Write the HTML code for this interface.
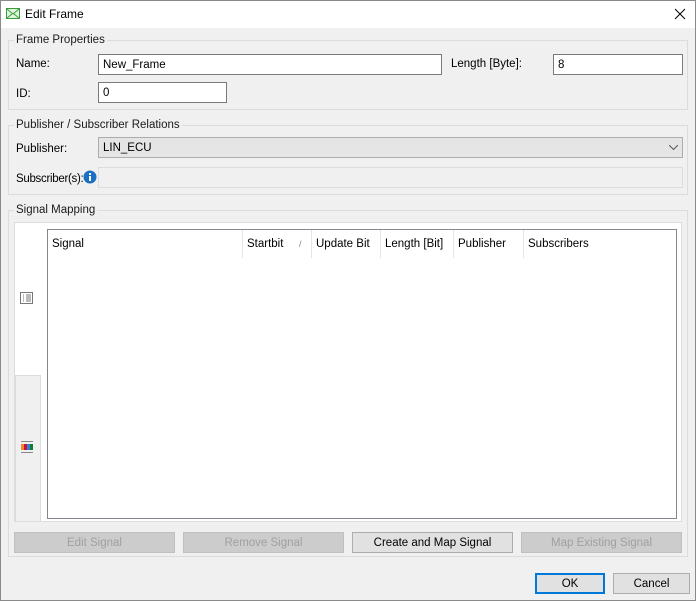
<!DOCTYPE html><html><head><style>
*{margin:0;padding:0;box-sizing:border-box}
body{width:696px;height:601px;background:#f0f0f0;font-family:"Liberation Sans",sans-serif;font-size:11.5px;line-height:15px;color:#000;position:relative;overflow:hidden}
.a{position:absolute}
.win{left:0;top:0;width:696px;height:601px;border:1px solid #8a8a8a}
.title{left:1px;top:1px;width:694px;height:27px;background:#fff}
.grp{border:1px solid #dcdcdc}
.lg{background:#f0f0f0;padding:0 2px;color:#1a1a1a}
.in{background:#fff;border:1px solid #7a7a7a;padding:2px 4px;height:21px;line-height:16px}
.btn{height:21px;text-align:center;line-height:20px;border:1px solid #bfbfbf;background:#cccccc;color:#a0a0a0}
.hd{top:0;height:28px;line-height:29px;padding-left:4px;border-right:1px solid #e5e5e5;color:#000}
</style></head><body>
<div class="a win"></div>
<div class="a title"></div>
<svg class="a" style="left:6px;top:8px" width="14" height="11"><rect x=".5" y=".5" width="13" height="10" fill="#dff5df" stroke="#3a9a3a"/><path d="M1 1l6 5 6-5M1 10l5-4M13 10l-5-4" stroke="#3a9a3a" fill="none"/></svg>
<div class="a" style="left:25px;top:7px;font-size:12px">Edit Frame</div>
<svg class="a" style="left:674px;top:8px" width="12" height="12"><path d="M1 1L11 11M11 1L1 11" stroke="#000" stroke-width="1"/></svg>

<div class="a grp" style="left:8px;top:40px;width:680px;height:70px"></div>
<div class="a lg" style="left:14px;top:33px">Frame Properties</div>
<div class="a" style="left:16px;top:57px">Name:</div>
<div class="a in" style="left:98px;top:54px;width:344px">New_Frame</div>
<div class="a" style="left:451px;top:57px">Length [Byte]:</div>
<div class="a in" style="left:553px;top:54px;width:130px">8</div>
<div class="a" style="left:16px;top:87px">ID:</div>
<div class="a in" style="left:98px;top:82px;width:129px">0</div>

<div class="a grp" style="left:8px;top:125px;width:680px;height:70px"></div>
<div class="a lg" style="left:14px;top:118px">Publisher / Subscriber Relations</div>
<div class="a" style="left:16px;top:142px">Publisher:</div>
<div class="a in" style="left:98px;top:137px;width:585px;background:#e5e5e5;border-color:#adadad">LIN_ECU</div>
<svg class="a" style="left:669px;top:145px" width="9" height="5"><path d="M0 0l4.5 4.5L9 0" stroke="#555" fill="none"/></svg>
<div class="a" style="left:16px;top:172px;letter-spacing:-0.3px">Subscriber(s):</div>
<svg class="a" style="left:83px;top:170px" width="14" height="14"><circle cx="7" cy="7" r="6.5" fill="#1a6fc4"/><rect x="6" y="6" width="2" height="5" fill="#fff"/><rect x="6" y="3" width="2" height="2" fill="#fff"/></svg>
<div class="a" style="left:98px;top:167px;width:585px;height:21px;border:1px solid #dcdcdc;background:#f0f0f0"></div>

<div class="a grp" style="left:8px;top:210px;width:680px;height:347px"></div>
<div class="a lg" style="left:14px;top:203px">Signal Mapping</div>
<div class="a" style="left:14px;top:222px;width:668px;height:300px;background:#fff;border:1px solid #dcdcdc"></div>
<div class="a" style="left:15px;top:375px;width:26px;height:146px;background:#f0f0f0;border:1px solid #dcdcdc;border-bottom:none"></div>
<svg class="a" style="left:20px;top:292px" width="13" height="12"><rect x=".5" y=".5" width="12" height="11" fill="none" stroke="#777"/><path d="M3 3h1M3 5h1M3 7h1M3 9h1M6 3h5M6 5h5M6 7h5M6 9h5" stroke="#777"/></svg>
<svg class="a" style="left:20px;top:441px" width="14" height="12"><path d="M1 .5h12M1 11.5h12" stroke="#888"/><rect x="1" y="3" width="3" height="6" fill="#f08a30"/><rect x="4" y="3" width="3" height="6" fill="#d01030"/><rect x="7" y="3" width="3" height="6" fill="#3080e0"/><rect x="10" y="3" width="3" height="6" fill="#108030"/></svg>
<div class="a" style="left:47px;top:229px;width:630px;height:290px;border:1px solid #828790;background:#fff">
<div class="a hd" style="left:0;width:195px">Signal</div>
<div class="a hd" style="left:195px;width:69px">Startbit<span style="position:absolute;left:56px;color:#888;font-size:9px">/</span></div>
<div class="a hd" style="left:264px;width:69px">Update Bit</div>
<div class="a hd" style="left:333px;width:73px">Length [Bit]</div>
<div class="a hd" style="left:406px;width:70px">Publisher</div>
<div class="a hd" style="left:476px;width:150px;border:none">Subscribers</div>
</div>

<div class="a btn" style="left:14px;top:532px;width:161px">Edit Signal</div>
<div class="a btn" style="left:183px;top:532px;width:161px">Remove Signal</div>
<div class="a btn" style="left:352px;top:532px;width:161px;background:#e1e1e1;border-color:#adadad;color:#000">Create and Map Signal</div>
<div class="a btn" style="left:521px;top:532px;width:161px">Map Existing Signal</div>
<div class="a btn" style="left:535px;top:573px;width:70px;background:#e1e1e1;border:2px solid #0078d7;color:#000;line-height:18px">OK</div>
<div class="a btn" style="left:613px;top:573px;width:77px;background:#e1e1e1;border-color:#adadad;color:#000">Cancel</div>
</body></html>
